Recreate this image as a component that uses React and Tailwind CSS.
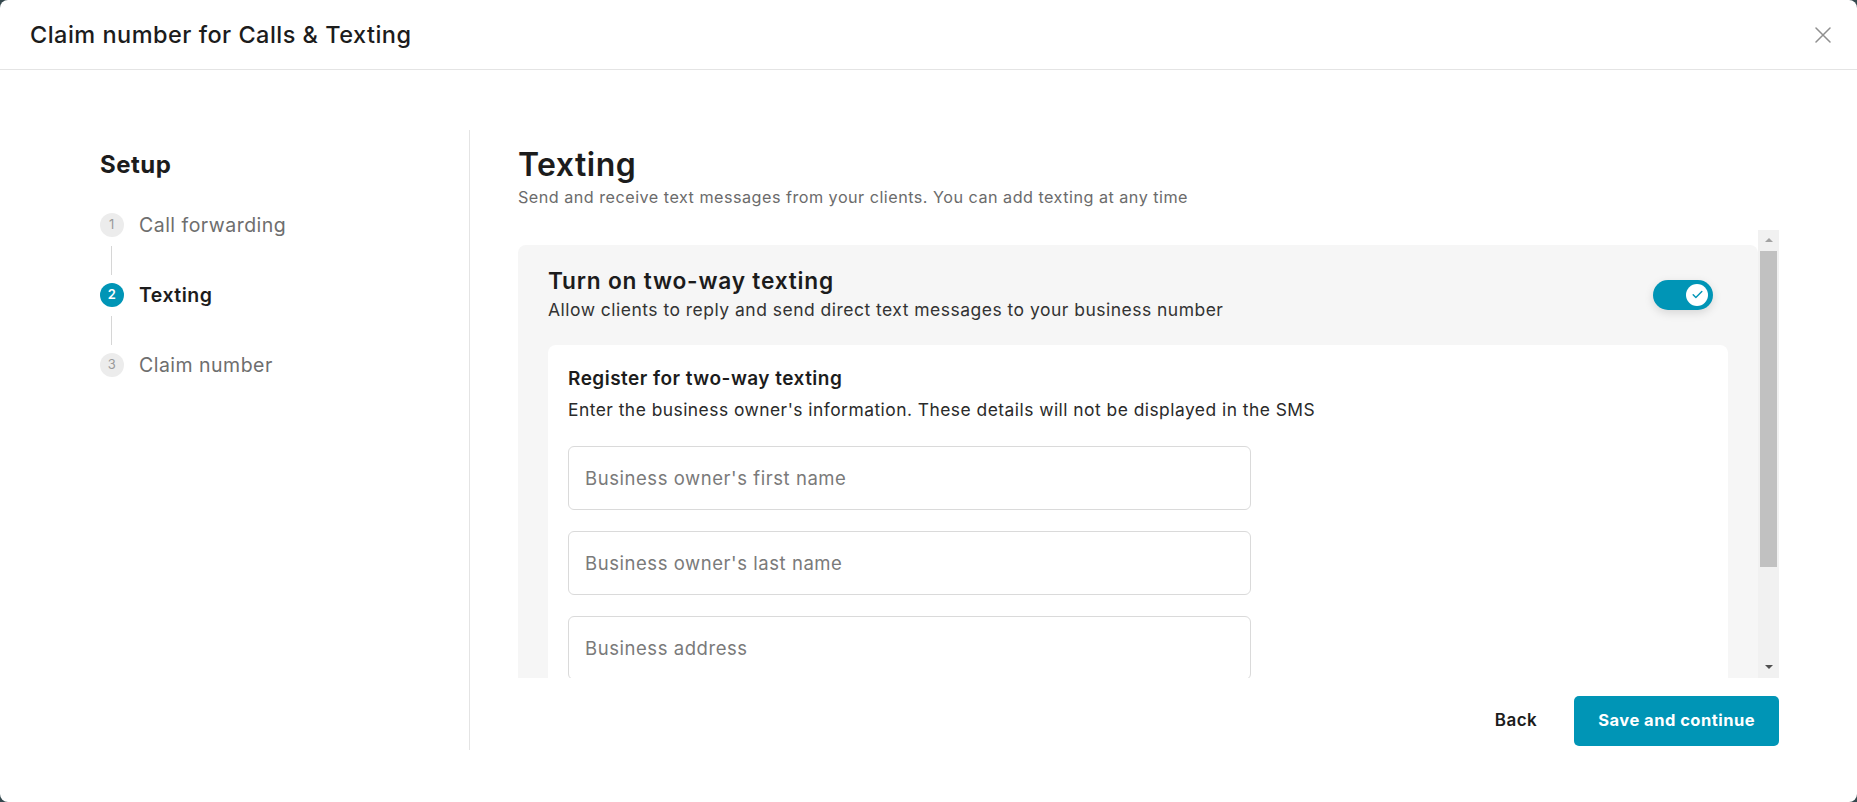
import React from "react";

function Step({ n, label, active }) {
  return (
    <div className="flex h-6 items-center gap-[15px]">
      <div
        className={
          active
            ? "flex h-6 w-6 items-center justify-center rounded-full bg-[#0095b6] text-[13px] font-semibold text-white"
            : "flex h-6 w-6 items-center justify-center rounded-full bg-[#ececec] text-[13px] text-[#9a9a9a]"
        }
      >
        {n}
      </div>
      <div
        className={
          active
            ? "text-[19.5px] leading-[24px] font-semibold text-[#1c1c1c]"
            : "text-[19.5px] leading-[24px] text-[#6e6e6e]"
        }
      >
        {label}
      </div>
    </div>
  );
}

function Connector() {
  return (
    <div className="flex h-[46px] pt-[9px] pb-[8px] pl-[11px]">
      <div className="w-px bg-[#d6d6d6]" />
    </div>
  );
}

function Field({ placeholder }) {
  return (
    <input
      readOnly
      placeholder={placeholder}
      className="h-[64px] w-full rounded-[6px] border border-[#dadada] bg-white px-[16px] text-[18.5px] tracking-[0.03em] text-[#222] outline-none placeholder:text-[#7a7a7a]"
    />
  );
}

export default function App() {
  return (
    <div className="h-[802px] w-full bg-[#34484e]">
      <div className="flex h-full flex-col overflow-hidden rounded-[8px] bg-white font-[Inter,sans-serif] tracking-[0.03em] text-[#1c1c1c]">
        {/* header */}
        <div className="flex h-[70px] shrink-0 items-center justify-between border-b border-[#e4e4e4] pl-[30px] pr-[26px]">
          <div className="text-[23.5px] leading-[30px] font-medium text-[#1c1c1c]">
            Claim number for Calls &amp; Texting
          </div>
          <svg width="16" height="16" viewBox="0 0 16 16" fill="none">
            <path d="M1 1L15 15M15 1L1 15" stroke="#8f8f8f" strokeWidth="1.5" strokeLinecap="round" />
          </svg>
        </div>

        {/* body */}
        <div className="flex flex-1 pt-[60px] pb-[52px] pl-[100px] pr-[78px]">
          {/* sidebar */}
          <div className="w-[369px] shrink-0 pt-[21px]">
            <div className="text-[24px] leading-[28px] font-bold text-[#1c1c1c]">Setup</div>
            <div className="mt-[34px] flex flex-col">
              <Step n="1" label="Call forwarding" />
              <Connector />
              <Step n="2" label="Texting" active />
              <Connector />
              <Step n="3" label="Claim number" />
            </div>
          </div>

          {/* main */}
          <div className="flex min-w-0 flex-1 flex-col border-l border-[#e4e4e4] pl-[48px] pt-[16px]">
            <div className="text-[32px] leading-[37px] font-semibold text-[#1c1c1c]">Texting</div>
            <div className="mt-[3px] text-[16.2px] leading-[22px] text-[#6b6b6b]">
              Send and receive text messages from your clients. You can add texting at any time
            </div>

            {/* scroll area */}
            <div className="mt-[21.5px] flex h-[448px] shrink-0">
              <div className="min-w-0 flex-1 overflow-hidden pt-[15px]">
                <div className="rounded-[8px] bg-[#f6f6f6] px-[30px] pt-[22px] pb-[30px]">
                  <div className="flex items-center justify-between pr-[15px]">
                    <div>
                      <div className="text-[22.7px] leading-[28px] font-semibold tracking-[0.035em] text-[#1c1c1c]">
                        Turn on two-way texting
                      </div>
                      <div className="mt-[2px] text-[17.5px] leading-[26px] text-[#333]">
                        Allow clients to reply and send direct text messages to your business number
                      </div>
                    </div>
                    <div className="flex h-[30px] w-[60px] items-center justify-end rounded-full bg-[#0095b6] pr-[5px] shadow-[0_3px_10px_rgba(0,0,0,0.13)]">
                      <div className="flex h-[22px] w-[22px] items-center justify-center rounded-full bg-white">
                        <svg width="13" height="13" viewBox="0 0 24 24" fill="none">
                          <path d="M4 12.5l5 5L20 6.5" stroke="#0095b6" strokeWidth="2.6" strokeLinecap="round" strokeLinejoin="round" />
                        </svg>
                      </div>
                    </div>
                  </div>

                  <div className="mt-[22px] rounded-[8px] bg-white px-[20px] pt-[22px] pb-[24px]">
                    <div className="text-[19px] leading-[24px] font-semibold text-[#1c1c1c]">
                      Register for two-way texting
                    </div>
                    <div className="mt-[6px] text-[17.4px] leading-[26px] text-[#2a2a2a]">
                      Enter the business owner's information. These details will not be displayed in the SMS
                    </div>
                    <div className="mt-[23px] flex w-[683px] flex-col gap-[21px]">
                      <Field placeholder="Business owner's first name" />
                      <Field placeholder="Business owner's last name" />
                      <Field placeholder="Business address" />
                    </div>
                  </div>
                </div>
              </div>

              {/* scrollbar */}
              <div className="flex w-[21px] shrink-0 flex-col bg-[#f1f1f1]">
                <div className="flex h-[21px] items-center justify-center">
                  <div className="h-0 w-0 border-x-[4px] border-b-[4px] border-x-transparent border-b-[#a3a3a3]" />
                </div>
                <div className="mx-[2px] h-[316px] bg-[#c1c1c1]" />
                <div className="flex-1" />
                <div className="flex h-[21px] items-center justify-center">
                  <div className="h-0 w-0 border-x-[4px] border-t-[4px] border-x-transparent border-t-[#505050]" />
                </div>
              </div>
            </div>

            {/* footer */}
            <div className="mt-[18px] flex h-[50px] shrink-0 items-center justify-end">
              <button className="mr-[37px] text-[17px] font-semibold text-[#1c1c1c]">Back</button>
              <button className="h-[50px] rounded-[5px] bg-[#0095b6] px-[24px] text-[16.5px] font-bold text-white">
                Save and continue
              </button>
            </div>
          </div>
        </div>
      </div>
    </div>
  );
}
